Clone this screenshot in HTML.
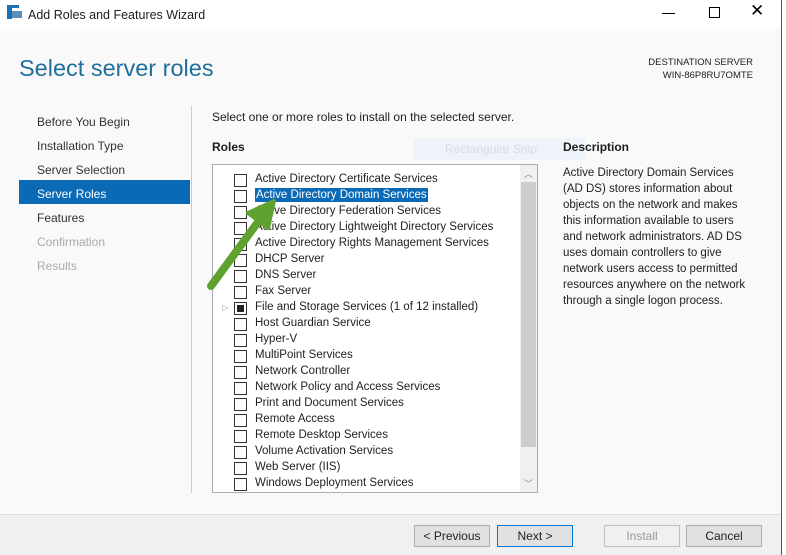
<!DOCTYPE html>
<html><head><style>
*{margin:0;padding:0;box-sizing:border-box}
body{width:786px;height:555px;position:relative;overflow:hidden;background:#fff;font-family:"Liberation Sans",sans-serif;font-size:11.5px;color:#1e1e1e}
.abs{position:absolute}
#win{left:0;top:0;width:782px;height:555px;background:#f9f9f9;border-right:1px solid #555}
#title{left:0;top:0;width:781px;height:29px;background:#fff}
.nav{left:37px;font-size:12px;color:#333}
.row{position:absolute;left:0;height:16px;width:300px}
.cb{position:absolute;left:21px;top:2px;width:13px;height:13px;border:1px solid #333;background:#fff}
.lbl{position:absolute;left:42px;top:1px;white-space:nowrap}
.btn{position:absolute;top:525px;height:22px;width:76px;border:1px solid #adadad;background:#e1e1e1;text-align:center;line-height:20px;font-size:12px}
</style></head><body>
<div id="win" class="abs"></div>
<div id="title" class="abs">
 <svg class="abs" style="left:7px;top:5px" width="16" height="14"><rect x="0" y="0" width="5" height="14" fill="#1e6fb4"/><rect x="0" y="0" width="12" height="3" fill="#1e6fb4"/><rect x="5" y="6" width="10" height="7" fill="#5a8fc0"/></svg>
 <div class="abs" style="left:28px;top:8px;font-size:12.5px">Add Roles and Features Wizard</div>
 <div class="abs" style="left:662px;top:13px;width:13px;height:1px;background:#000"></div>
 <div class="abs" style="left:709px;top:7px;width:11px;height:11px;border:1px solid #000"></div>
 <div class="abs" style="left:750px;top:1px;font-size:17px;color:#000">✕</div>
</div>
<div class="abs" style="left:19px;top:55px;font-size:23.5px;color:#1f6e9c;font-weight:300">Select server roles</div>
<div class="abs" style="left:600px;top:56px;width:153px;text-align:right;font-size:9.5px;line-height:13px">DESTINATION SERVER<br>WIN-86P8RU7OMTE</div>
<div class="abs" style="left:191px;top:106px;width:1px;height:387px;background:#ccc"></div>
<div class="abs nav" style="top:115px">Before You Begin</div>
<div class="abs nav" style="top:139px">Installation Type</div>
<div class="abs nav" style="top:163px">Server Selection</div>
<div class="abs" style="left:19px;top:180px;width:171px;height:24px;background:#0a6ab6"></div>
<div class="abs nav" style="top:187px;color:#fff">Server Roles</div>
<div class="abs nav" style="top:211px">Features</div>
<div class="abs nav" style="top:235px;color:#aaa">Confirmation</div>
<div class="abs nav" style="top:259px;color:#aaa">Results</div>
<div class="abs" style="left:212px;top:110px;font-size:12px">Select one or more roles to install on the selected server.</div>
<div class="abs" style="left:212px;top:140px;font-size:12px;font-weight:bold">Roles</div>
<div class="abs" style="left:413px;top:138px;width:172px;height:22px;background:#eef3fa;color:#d6dce4;font-size:12px;padding:4px 0 0 32px">Rectangular Snip</div>
<div class="abs" style="left:563px;top:140px;font-size:12px;font-weight:bold">Description</div>
<div class="abs" style="left:563px;top:165px;width:188px;font-size:11.5px;line-height:16px">Active Directory Domain Services (AD DS) stores information about objects on the network and makes this information available to users and network administrators. AD DS uses domain controllers to give network users access to permitted resources anywhere on the network through a single logon process.</div>
<div class="abs" style="left:212px;top:164px;width:326px;height:329px;border:1px solid #acacac;background:#fff;overflow:hidden">
 <div class="abs" style="left:307px;top:0;width:17px;height:327px;background:#f0f0f0"></div>
 <div class="abs" style="left:308px;top:17px;width:15px;height:265px;background:#cdcdcd"></div>
 <div class="abs" style="left:311px;top:2px;font-size:9px;color:#888">︿</div>
 <div class="abs" style="left:311px;top:312px;font-size:9px;color:#888">﹀</div>
 <div class="row" style="top:7px"><div class="cb"></div><div class="lbl">Active Directory Certificate Services</div></div>
 <div class="row" style="top:23px"><div class="cb"></div><div class="lbl" style="background:#0a6ab6;color:#fff;top:0;padding:1px 1px">Active Directory Domain Services</div></div>
 <div class="row" style="top:39px"><div class="cb"></div><div class="lbl">Active Directory Federation Services</div></div>
 <div class="row" style="top:55px"><div class="cb"></div><div class="lbl">Active Directory Lightweight Directory Services</div></div>
 <div class="row" style="top:71px"><div class="cb"></div><div class="lbl">Active Directory Rights Management Services</div></div>
 <div class="row" style="top:87px"><div class="cb"></div><div class="lbl">DHCP Server</div></div>
 <div class="row" style="top:103px"><div class="cb"></div><div class="lbl">DNS Server</div></div>
 <div class="row" style="top:119px"><div class="cb"></div><div class="lbl">Fax Server</div></div>
 <div class="row" style="top:135px"><div class="abs" style="left:9px;top:3px;font-size:8px;color:#999">▷</div><div class="cb"><div class="abs" style="left:2px;top:2px;width:7px;height:7px;background:#222"></div></div><div class="lbl">File and Storage Services (1 of 12 installed)</div></div>
 <div class="row" style="top:151px"><div class="cb"></div><div class="lbl">Host Guardian Service</div></div>
 <div class="row" style="top:167px"><div class="cb"></div><div class="lbl">Hyper-V</div></div>
 <div class="row" style="top:183px"><div class="cb"></div><div class="lbl">MultiPoint Services</div></div>
 <div class="row" style="top:199px"><div class="cb"></div><div class="lbl">Network Controller</div></div>
 <div class="row" style="top:215px"><div class="cb"></div><div class="lbl">Network Policy and Access Services</div></div>
 <div class="row" style="top:231px"><div class="cb"></div><div class="lbl">Print and Document Services</div></div>
 <div class="row" style="top:247px"><div class="cb"></div><div class="lbl">Remote Access</div></div>
 <div class="row" style="top:263px"><div class="cb"></div><div class="lbl">Remote Desktop Services</div></div>
 <div class="row" style="top:279px"><div class="cb"></div><div class="lbl">Volume Activation Services</div></div>
 <div class="row" style="top:295px"><div class="cb"></div><div class="lbl">Web Server (IIS)</div></div>
 <div class="row" style="top:311px"><div class="cb"></div><div class="lbl">Windows Deployment Services</div></div>
</div>
<svg class="abs" style="left:0;top:0" width="786" height="555"><line x1="211" y1="286" x2="258" y2="222" stroke="#5fa22f" stroke-width="8" stroke-linecap="round"/><polygon points="274,201 248,213 268,228" fill="#5fa22f" stroke="#5fa22f" stroke-width="4" stroke-linejoin="round"/></svg>
<div class="abs" style="left:0;top:514px;width:781px;height:41px;background:#f0f0f0;border-top:1px solid #dcdcdc"></div>
<div class="btn" style="left:414px">&lt; Previous</div>
<div class="btn" style="left:497px;border-color:#0078d7">Next &gt;</div>
<div class="btn" style="left:604px;color:#999;border-color:#bfbfbf;background:#f0f0f0">Install</div>
<div class="btn" style="left:686px">Cancel</div>
</body></html>
